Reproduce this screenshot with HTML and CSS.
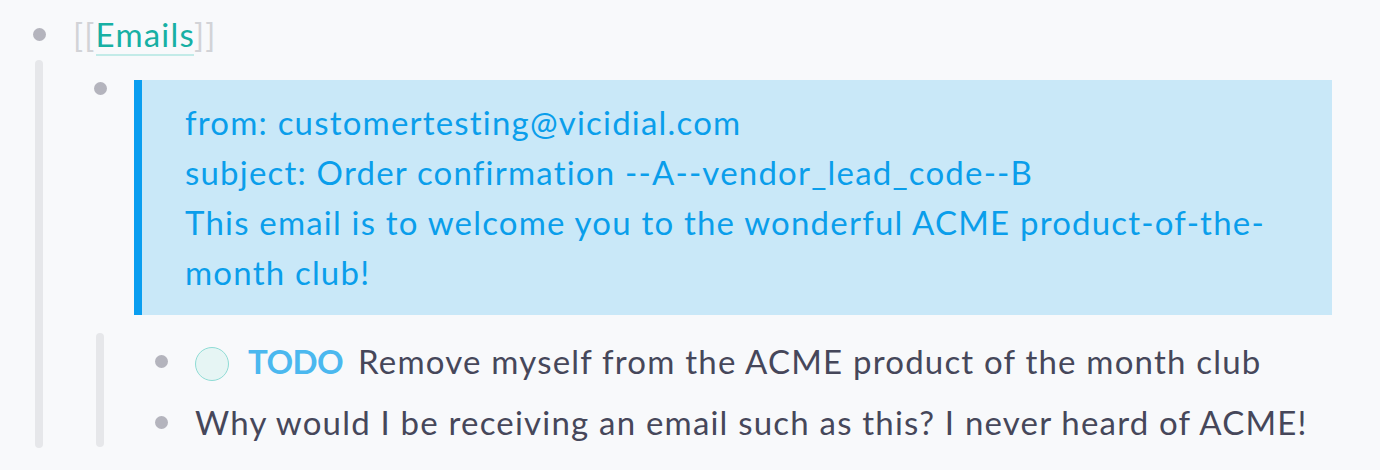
FILE: index.html
```html
<!DOCTYPE html>
<html lang="en">
<head>
  <meta charset="UTF-8" />
  <title>Emails</title>
  <link rel="stylesheet" href="styles.css">
</head>
<body>
  <div class="page">
    <div class="block">
      <div class="row">
        <div class="bullet-col"><span class="bullet"></span></div>
        <div class="content">
          <span class="bracket">[[</span><a class="page-ref" href="#">Emails</a><span class="bracket">]]</span>
        </div>
      </div>

      <div class="children">
        <div class="guide"></div>
        <div class="child-list">
          <div class="block">
            <div class="row">
              <div class="bullet-col"><span class="bullet"></span></div>
              <div class="content">
                <blockquote class="quote">
                  from: customertesting@vicidial.com<br>
                  subject: Order confirmation --A--vendor_lead_code--B<br>
                  This email is to welcome you to the wonderful ACME product-of-the-month club!
                </blockquote>
              </div>
            </div>

            <div class="children">
              <div class="guide"></div>
              <div class="child-list">
                <div class="block">
                  <div class="row">
                    <div class="bullet-col"><span class="bullet"></span></div>
                    <div class="content todo-line">
                      <span class="checkbox"></span>
                      <span class="marker">TODO</span>
                      <span>Remove myself from the ACME product of the month club</span>
                    </div>
                  </div>
                </div>
                <div class="block">
                  <div class="row">
                    <div class="bullet-col"><span class="bullet"></span></div>
                    <div class="content">Why would I be receiving an email such as this? I never heard of ACME!</div>
                  </div>
                </div>
              </div>
            </div>
          </div>
        </div>
      </div>
    </div>
  </div>
</body>
</html>
```

FILE: styles.css
```css
body {
  margin: 0;
  background: #f8f9fb;
  font-family: Lato, 'Noto Sans', sans-serif;
  font-size: 33px;
  letter-spacing: 1.2px;
  font-variant-ligatures: none;
  color: #46475a;
}

.page {
  padding: 10px 48px 0 24px;
}

.row {
  display: flex;
  align-items: flex-start;
}

.bullet-col {
  width: 30px;
  height: 48px;
  flex-shrink: 0;
  display: flex;
  align-items: center;
  justify-content: center;
}

.bullet {
  width: 13px;
  height: 13px;
  border-radius: 50%;
  background: #b4b4bd;
}

.content {
  margin-left: 19px;
  line-height: 48px;
  flex: 1;
}

.bracket {
  color: #d2d3d7;
}

.page-ref {
  color: #17b0a4;
  text-decoration: none;
  border-bottom: 2px solid #c3ebe8;
}

.children {
  display: flex;
  margin-top: 2px;
  padding-left: 11px;
}

.guide {
  width: 8px;
  flex-shrink: 0;
  border-radius: 4px;
  background: #e6e7ea;
}

.child-list {
  flex: 1;
  margin-left: 42px;
  padding: 4px 0 1px;
  display: flex;
  flex-direction: column;
  gap: 13px;
}

.quote {
  margin: 16px 0;
  padding: 17px 40px 18px 43px;
  background: #c9e8f8;
  border-left: 8px solid #0a9ef0;
  color: #0a9eeb;
  line-height: 50px;
}

.todo-line {
  display: flex;
  align-items: center;
}

.checkbox {
  width: 32px;
  height: 32px;
  margin-top: 5px;
  border-radius: 50%;
  border: 1.5px solid #8fdcd5;
  background: #e6f5f4;
  margin-right: 19px;
  flex-shrink: 0;
}

.marker {
  color: #4bb8ef;
  font-weight: 700;
  letter-spacing: -0.6px;
  margin-right: 15px;
}
```
